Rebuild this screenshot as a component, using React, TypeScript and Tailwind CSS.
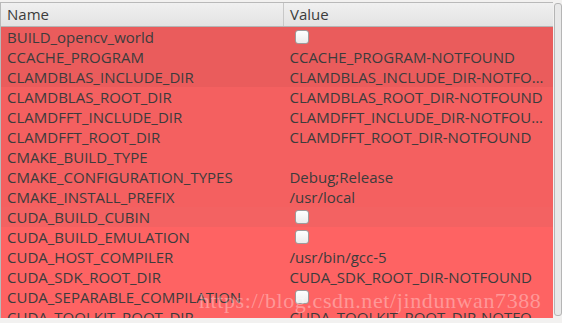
import React from "react";

type Row = { name: string; value: string | null; bg: string };

const rows: Row[] = [
  { name: "BUILD_opencv_world", value: null, bg: "bg-[#ea5c5c]" },
  { name: "CCACHE_PROGRAM", value: "CCACHE_PROGRAM-NOTFOUND", bg: "bg-[#ea5c5c]" },
  { name: "CLAMDBLAS_INCLUDE_DIR", value: "CLAMDBLAS_INCLUDE_DIR-NOTFOUND", bg: "bg-[#ea5c5c]" },
  { name: "CLAMDBLAS_ROOT_DIR", value: "CLAMDBLAS_ROOT_DIR-NOTFOUND", bg: "bg-[#f46060]" },
  { name: "CLAMDFFT_INCLUDE_DIR", value: "CLAMDFFT_INCLUDE_DIR-NOTFOUND", bg: "bg-[#f46060]" },
  { name: "CLAMDFFT_ROOT_DIR", value: "CLAMDFFT_ROOT_DIR-NOTFOUND", bg: "bg-[#f46060]" },
  { name: "CMAKE_BUILD_TYPE", value: "", bg: "bg-[#f46060]" },
  { name: "CMAKE_CONFIGURATION_TYPES", value: "Debug;Release", bg: "bg-[#f46060]" },
  { name: "CMAKE_INSTALL_PREFIX", value: "/usr/local", bg: "bg-[#f46060]" },
  { name: "CUDA_BUILD_CUBIN", value: null, bg: "bg-[#f36262]" },
  { name: "CUDA_BUILD_EMULATION", value: null, bg: "bg-[#fe6363]" },
  { name: "CUDA_HOST_COMPILER", value: "/usr/bin/gcc-5", bg: "bg-[#fe6363]" },
  { name: "CUDA_SDK_ROOT_DIR", value: "CUDA_SDK_ROOT_DIR-NOTFOUND", bg: "bg-[#fe6363]" },
  { name: "CUDA_SEPARABLE_COMPILATION", value: null, bg: "bg-[#fe6363]" },
  { name: "CUDA_TOOLKIT_ROOT_DIR", value: "CUDA_TOOLKIT_ROOT_DIR-NOTFOUND", bg: "bg-[#fe6363]" },
];

export default function App() {
  return (
    <div className="w-[562px] h-[323px] overflow-hidden bg-[#f2f1f0] relative font-['Open_Sans','DejaVu_Sans',sans-serif] text-[15px] text-[#3c3c3c]">
      <div className="flex h-[318px] pt-[2px]">
        <div className="w-[554px] border-l border-t border-[#b9b9b9] flex flex-col overflow-hidden">
          <div className="flex h-[24px] shrink-0 bg-gradient-to-b from-[#f0f0f0] to-[#e3e3e3] border-b border-[#b5b5b5]">
            <div className="w-[283px] border-r border-[#c8c8c8] pl-[6px] flex items-center">Name</div>
            <div className="flex-1 pl-[6px] flex items-center">Value</div>
          </div>
          <div className="flex-1 overflow-hidden">
            {rows.map((r) => (
              <div key={r.name} className={`flex h-[20px] ${r.bg} leading-[20px]`}>
                <div className="w-[283px] pl-[6px] truncate">{r.name}</div>
                <div className="w-[270px] pl-[6px] pr-[6px] truncate">
                  {r.value === null ? (
                    <span className="inline-block align-middle mb-[3px] ml-[6px] w-[14px] h-[14px] rounded-[3px] border border-[#9c9c9c] bg-gradient-to-b from-white to-[#ececec]" />
                  ) : (
                    r.value
                  )}
                </div>
              </div>
            ))}
          </div>
        </div>
        <div className="w-[8px] ml-[1px] mt-[1px] mb-[2px] border border-[#b5b5b5] rounded-[3px] bg-[#e8e8e8]" />
      </div>
      <div className="absolute left-[199px] top-[284px] font-['Liberation_Serif',serif] text-[22px] tracking-[0.6px] text-white/35 whitespace-nowrap">
        https://blog.csdn.net/jindunwan7388
      </div>
    </div>
  );
}
